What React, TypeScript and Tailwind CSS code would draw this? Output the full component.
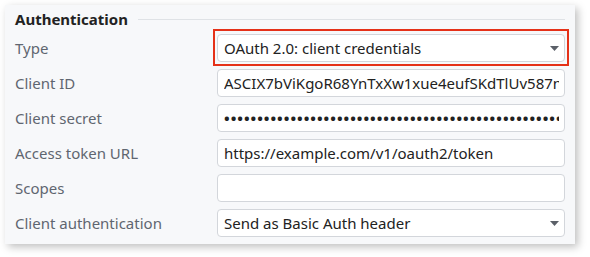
import React from "react";

const font = { fontFamily: '"Noto Sans", "Open Sans", sans-serif' };

function Arrow() {
  return (
    <svg width="9" height="5" viewBox="0 0 9 5" className="shrink-0">
      <path d="M0 0 L9 0 L4.5 5 Z" fill="#5b6068" />
    </svg>
  );
}

function Field({ children, select }: { children?: React.ReactNode; select?: boolean }) {
  return (
    <div className="flex h-[28px] w-[348px] items-center overflow-hidden rounded-[4px] border border-[#d3d6db] bg-white pl-[6px] pr-[5px] text-[15px] text-[#222]">
      <div className="min-w-0 flex-1 overflow-hidden whitespace-nowrap leading-[22px]">{children}</div>
      {select && <Arrow />}
    </div>
  );
}

function Row({ label, children }: { label: string; children: React.ReactNode }) {
  return (
    <div className="flex h-[28px] items-center">
      <div className="w-[202px] text-[15px] text-[#5f6670]">{label}</div>
      {children}
    </div>
  );
}

export default function App() {
  return (
    <div className="h-[257px] w-[590px] bg-white p-[5px]" style={font}>
      <div className="h-[239px] w-[570px] bg-[#f7f8fa] px-[10px] pt-[3px] shadow-[3px_3px_8px_rgba(0,0,0,0.25)]">
        <div className="flex h-[22px] items-center">
          <div className="text-[15px] font-bold text-[#222]">Authentication</div>
          <div className="ml-[10px] h-px flex-1 bg-[#dfe2e6]" />
        </div>
        <div className="mt-[4px] flex flex-col gap-[7px]">
          <Row label="Type">
            <div className="relative">
              <Field select>OAuth 2.0: client credentials</Field>
              <div className="pointer-events-none absolute -top-[5px] -bottom-[4px] -left-[4px] -right-[4px] border-2 border-[#e53118]" />
            </div>
          </Row>
          <Row label="Client ID">
            <Field>ASCIX7bViKgoR68YnTxXw1xue4eufSKdTlUv587nQwE3pLm</Field>
          </Row>
          <Row label="Client secret">
            <Field>
              <span className="font-bold tracking-[1px]">{"•".repeat(60)}</span>
            </Field>
          </Row>
          <Row label="Access token URL">
            <Field>https://example.com/v1/oauth2/token</Field>
          </Row>
          <Row label="Scopes">
            <Field />
          </Row>
          <Row label="Client authentication">
            <Field select>Send as Basic Auth header</Field>
          </Row>
        </div>
      </div>
    </div>
  );
}
